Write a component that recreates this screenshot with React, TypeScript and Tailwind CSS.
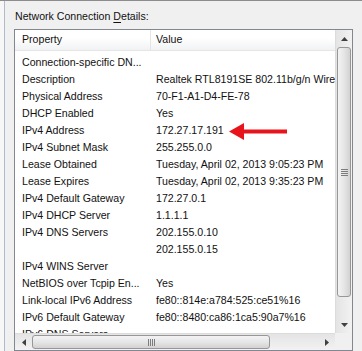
import React from "react"

const rows: [string, string][] = [
  ["Connection-specific DN...", ""],
  ["Description", "Realtek RTL8191SE 802.11b/g/n Wireless LAN 802.11n PCI-E NIC"],
  ["Physical Address", "70-F1-A1-D4-FE-78"],
  ["DHCP Enabled", "Yes"],
  ["IPv4 Address", "172.27.17.191"],
  ["IPv4 Subnet Mask", "255.255.0.0"],
  ["Lease Obtained", "Tuesday, April 02, 2013 9:05:23 PM"],
  ["Lease Expires", "Tuesday, April 02, 2013 9:35:23 PM"],
  ["IPv4 Default Gateway", "172.27.0.1"],
  ["IPv4 DHCP Server", "1.1.1.1"],
  ["IPv4 DNS Servers", "202.155.0.10"],
  ["", "202.155.0.15"],
  ["IPv4 WINS Server", ""],
  ["NetBIOS over Tcpip En...", "Yes"],
  ["Link-local IPv6 Address", "fe80::814e:a784:525:ce51%16"],
  ["IPv6 Default Gateway", "fe80::8480:ca86:1ca5:90a7%16"],
  ["IPv6 DNS Servers", ""],
]

function VScrollbar() {
  return (
    <div className="flex h-[303px] w-[17px] shrink-0 flex-col border-l border-[#dcdcdc] bg-gradient-to-r from-[#e4e4e4] to-[#f2f2f2]">
      <div className="flex h-[17px] shrink-0 items-center justify-center">
        <svg width="7" height="4" viewBox="0 0 7 4"><path d="M0 4 L3.5 0 L7 4 Z" fill="#404040" /></svg>
      </div>
      <div className="mx-[1px] flex h-[250px] shrink-0 items-center justify-center rounded-[3px] border border-[#979797] bg-gradient-to-r from-[#f3f3f3] via-[#e6e6e6] to-[#d2d2d2]">
        <div className="flex flex-col gap-[1px]">
          <div className="h-px w-[7px] bg-[#7d7d7d]" />
          <div className="h-px w-[7px] bg-[#7d7d7d]" />
          <div className="h-px w-[7px] bg-[#7d7d7d]" />
          <div className="h-px w-[7px] bg-[#7d7d7d]" />
        </div>
      </div>
      <div className="flex-1" />
      <div className="flex h-[17px] shrink-0 items-center justify-center">
        <svg width="7" height="4" viewBox="0 0 7 4"><path d="M0 0 L3.5 4 L7 0 Z" fill="#404040" /></svg>
      </div>
    </div>
  )
}

function HScrollbar() {
  return (
    <div className="flex h-[17px] w-[320px] shrink-0 border-t border-[#dcdcdc] bg-gradient-to-b from-[#e4e4e4] to-[#f2f2f2]">
      <div className="flex w-[17px] shrink-0 items-center justify-center">
        <svg width="4" height="7" viewBox="0 0 4 7"><path d="M4 0 L0 3.5 L4 7 Z" fill="#404040" /></svg>
      </div>
      <div className="my-[1px] flex w-[238px] shrink-0 items-center justify-center rounded-[3px] border border-[#979797] bg-gradient-to-b from-[#f3f3f3] via-[#e6e6e6] to-[#d2d2d2]">
        <div className="flex gap-[1px]">
          <div className="h-[7px] w-px bg-[#7d7d7d]" />
          <div className="h-[7px] w-px bg-[#7d7d7d]" />
          <div className="h-[7px] w-px bg-[#7d7d7d]" />
          <div className="h-[7px] w-px bg-[#7d7d7d]" />
        </div>
      </div>
      <div className="flex-1" />
      <div className="flex w-[17px] shrink-0 items-center justify-center">
        <svg width="4" height="7" viewBox="0 0 4 7"><path d="M0 0 L4 3.5 L0 7 Z" fill="#404040" /></svg>
      </div>
    </div>
  )
}

export default function App() {
  return (
    <div
      className="relative flex h-[351px] w-[362px] overflow-hidden border-t border-[#8c8c8c] bg-[#f0f0f0] text-[10.6px] text-[#111]"
      style={{ fontFamily: '"Liberation Sans", Arial, sans-serif' }}
    >
      <div className="w-[5px] shrink-0 border-r border-[#aebccb] bg-[#f7f7f7]" />
      <div className="flex w-[357px] shrink-0 flex-col pl-[9px]">
        <div className="flex h-[28px] shrink-0 items-center pl-[1px] pt-[4px]">
          <span>Network Connection&nbsp;<span className="underline underline-offset-2">D</span>etails:</span>
        </div>
        <div className="relative flex h-[322px] w-[339px] shrink-0 flex-col border border-[#828790] bg-white">
          <div className="flex h-[303px] shrink-0">
            <div className="h-[303px] w-[320px] shrink-0 overflow-hidden">
              <div className="flex h-[21px] border-b border-[#e5e5e5] bg-gradient-to-b from-white from-40% to-[#f1f2f4]">
                <div className="flex w-[136px] shrink-0 items-center border-r border-[#e5e5e5] pl-[7px]">Property</div>
                <div className="flex flex-1 items-center pl-[5px]">Value</div>
              </div>
              <div className="pt-[3px]">
                {rows.map(([k, v], i) => (
                  <div key={i} className="flex h-[17px] items-center whitespace-nowrap">
                    <div className="w-[136px] shrink-0 overflow-hidden pl-[7px]">{k}</div>
                    <div className="shrink-0 pl-[5px]">{v}</div>
                  </div>
                ))}
              </div>
            </div>
            <VScrollbar />
          </div>
          <div className="flex h-[17px] shrink-0">
            <HScrollbar />
            <div className="w-[17px] shrink-0 bg-[#f0f0f0]" />
          </div>
          <svg className="absolute left-[214px] top-[92px]" width="60" height="19" viewBox="0 0 60 19">
            <path d="M0 9.5 L15 1 L15 7.5 L58 7.5 L58 11.5 L15 11.5 L15 18 Z" fill="#e8141b" />
          </svg>
        </div>
      </div>
    </div>
  )
}
